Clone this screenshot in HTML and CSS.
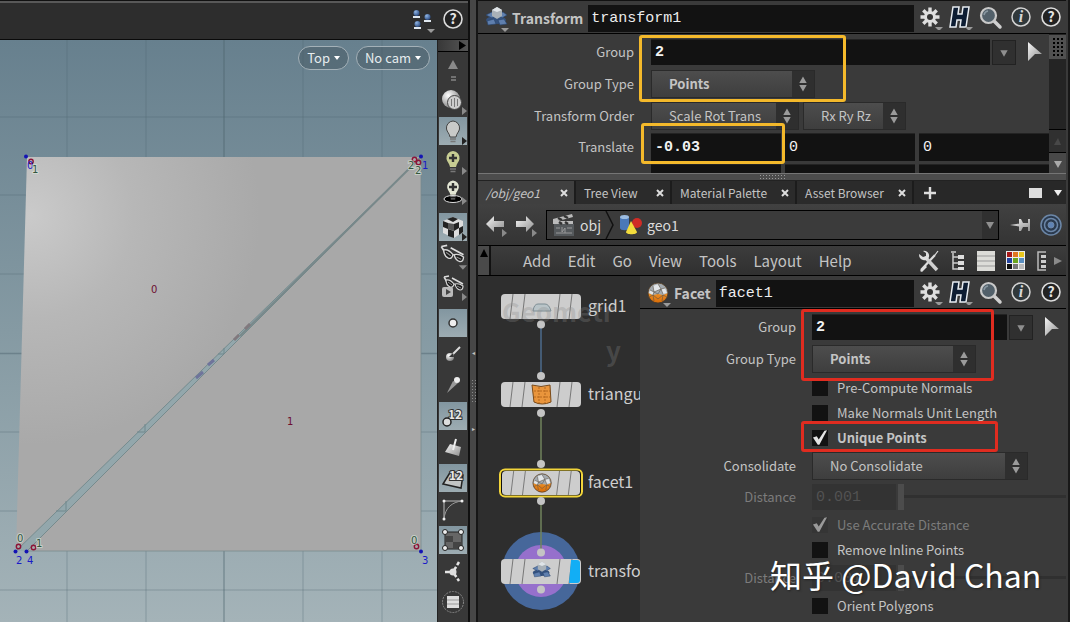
FILE: index.html
```
<!DOCTYPE html>
<html lang="en">

<head>
    <meta charset="UTF-8">
    <meta name="viewport" content="width=device-width, initial-scale=1.0">
    <link rel="stylesheet" href="styles.css">
    <title>geo1</title>
</head>

<body>
    <!-- shared icons -->
    <svg class="sprite" aria-hidden="true">
        <defs>
            <linearGradient id="metal" x1="0" y1="0" x2="1" y2="1">
                <stop offset="0" stop-color="#f6f6f6"/><stop offset="1" stop-color="#8e8e8e"/>
            </linearGradient>
            <radialGradient id="ball" cx=".35" cy=".3" r=".8">
                <stop offset="0" stop-color="#fff"/><stop offset="1" stop-color="#777"/>
            </radialGradient>
            <radialGradient id="blueball" cx=".35" cy=".3" r=".8">
                <stop offset="0" stop-color="#8fb4e2"/><stop offset="1" stop-color="#1f3f78"/>
            </radialGradient>
            <linearGradient id="orange" x1="0" y1="0" x2="0" y2="1">
                <stop offset="0" stop-color="#ffb347"/><stop offset="1" stop-color="#d96c06"/>
            </linearGradient>
        </defs>
        <symbol id="gear" viewBox="0 0 24 24">
            <g stroke="#dedede" stroke-width="3.4">
                <path d="M11 1.500V20.500M1.500 11H20.500M4.300 4.300L17.700 17.700M17.700 4.300L4.300 17.700"/>
            </g>
            <circle cx="11" cy="11" r="6" fill="#dedede"/>
            <circle cx="11" cy="11" r="3" fill="#333"/>
            <path d="M16 21h8l-4 4z" fill="#9a9a9a"/>
        </symbol>
        <symbol id="hlogo" viewBox="0 0 24 24">
            <path d="M4 1h6l-1 7h4l1-7h6l-3 20h-6l1-7H8l-1 7H1z" fill="#0d1d33" stroke="#e8edf2" stroke-width="1.500"/>
            <path d="M16 21h8l-4 4z" fill="#9a9a9a"/>
        </symbol>
        <symbol id="search" viewBox="0 0 24 24">
            <path d="M14 14l7 7" stroke="#d0d0d0" stroke-width="3.500" stroke-linecap="round"/>
            <circle cx="9.500" cy="9.500" r="7.500" fill="#52606a" stroke="#c9c9c9" stroke-width="2.200"/>
            <path d="M5 9a5 5 0 0 1 4-4" fill="none" stroke="#8a98a2" stroke-width="1.500"/>
        </symbol>
        <symbol id="info" viewBox="0 0 24 24">
            <circle cx="12" cy="11" r="9" fill="#30383b" stroke="#d2d2d2" stroke-width="1.500"/>
            <text x="12" y="16" text-anchor="middle" font-family="Liberation Serif, serif" font-style="italic" font-weight="bold" font-size="16" fill="#d8d8d8">i</text>
        </symbol>
        <symbol id="help" viewBox="0 0 24 24">
            <circle cx="12" cy="11" r="9" fill="#222" stroke="#dcdcdc" stroke-width="1.600"/>
            <text x="12" y="16" text-anchor="middle" font-family="Noto Sans CJK SC, sans-serif" font-weight="bold" font-size="14" fill="#e4e4e4">?</text>
        </symbol>
        <symbol id="updown" viewBox="0 0 22 28">
            <path d="M11 6l4 7H7zM11 22l4-7H7z" fill="#9b9b9b"/>
        </symbol>
        <symbol id="down" viewBox="0 0 24 24">
            <path d="M8 9h8l-4 7z" fill="#8f8f8f"/>
        </symbol>
        <symbol id="cursor" viewBox="0 0 16 20">
            <path d="M1 0l14 12H8l-7 7z" fill="url(#metal)"/>
        </symbol>
        <symbol id="facet" viewBox="0 0 24 24">
            <circle cx="11" cy="12" r="10" fill="url(#orange)"/>
            <path d="M1 12a10 10 0 0 1 20 0l-5 2-5-1-5 1z" fill="#a4abb0"/>
            <path d="M6 5l5-2 3 5-7 3zM14 8l4-1 2 5-4 1zM3 9l4 2-1 3-4-2z" fill="#e2e6e9"/>
            <path d="M11 3l3 5 2 5M7 11l7-3 4-1M6 5l1 6-1 3M3 9l4 2 4 2 3-5M2 16l4-2 5 4 5-4 4 2M6 14l1 6M16 14l-1 6" fill="none" stroke="#5b5247" stroke-width=".6"/>
            <circle cx="11" cy="12" r="10" fill="none" stroke="#4a3a2a" stroke-width=".8"/>
        </symbol>
        <symbol id="xform" viewBox="0 0 24 24">
            <ellipse cx="11" cy="14" rx="10" ry="4" fill="#35527e"/>
            <path d="M1 9l6-3 5 3-5 3zM13 8l5-2 4 3-5 3zM2 15l7-2 2 5-8 1zM13 14l6-1 3 5-7 1z" fill="#5f7fae" stroke="#27436c" stroke-width=".6"/>
            <path d="M7 4l5-3 5 3v6l-5 3-5-3z" fill="#a9b1b8"/>
            <path d="M7 4l5-3 5 3-5 2z" fill="#dfe4e8"/>
        </symbol>
        <symbol id="bulb" viewBox="0 0 24 28">
            <path d="M12 4a7 7 0 0 0-6.500 8c.5 3 3 4.500 3.500 8h6c.5-3.500 3-5 3.500-8A7 7 0 0 0 12 4z"/>
            <path d="M9 22h6M9.500 24.500h5" stroke="#777" stroke-width="1.500"/>
        </symbol>
        <symbol id="glasses" viewBox="0 0 24 24">
            <path d="M2 4l5-1M2 4l3 5M10 5l11 6" stroke="#ddd" stroke-width="1.500" fill="none"/>
            <path d="M4 7q4-1 8 4-1 4-4 3-4-2-4-7zM13 11q4-1 8 2 0 4-3 4-4-1-5-6z" fill="#1b1b1b" stroke="#d6d6d6" stroke-width="1.200"/>
            <path d="M6 9l4 3M15 13l4 2" stroke="#888"/>
        </symbol>
    </svg>

    <div class="app">
        <section class="scene-pane">
            <header class="scene-top">
                <button class="icon-btn" aria-label="Snapping">
                    <svg width="24" height="24" viewBox="0 0 24 24">
                        <g fill="#dfe7ef"><path d="M2 8h7v2H2zM13 12h7v2h-7zM3 19h7v2H3z"/></g>
                        <g fill="url(#blueball)"><circle cx="5.500" cy="5" r="3"/><circle cx="16.500" cy="9" r="3"/><circle cx="6.500" cy="16" r="3"/></g>
                        <path d="M16 21h8l-4 4z" fill="#9a9a9a"/>
                    </svg>
                </button>
                <button class="icon-btn" aria-label="Help"><svg width="24" height="24"><use href="#help"/></svg></button>
            </header>
            <div class="scene-body">
                <div class="viewport">
                    <svg class="scene" viewBox="0 40 437 582" preserveAspectRatio="xMidYMid slice">
                        <defs>
                            <linearGradient id="sky" x1="0" y1="0" x2="0" y2="1">
                                <stop offset="0" stop-color="#67808e"/><stop offset=".5" stop-color="#859aa3"/><stop offset="1" stop-color="#a4b3b8"/>
                            </linearGradient>
                            <radialGradient id="shade" gradientUnits="userSpaceOnUse" cx="30" cy="215" r="230">
                                <stop offset="0" stop-color="#cacaca"/><stop offset=".45" stop-color="#b7b7b7"/><stop offset="1" stop-color="#a9a9a9"/>
                            </radialGradient>
                        </defs>
                        <rect x="-500" y="40" width="1500" height="582" fill="url(#sky)"/>
                        <path d="M67 40v582M146 40v582M303 40v582M382 40v582M-500 117h1500M-500 195h1500M-500 274h1500M-500 432h1500M-500 511h1500M-500 590h1500" stroke="#4b616c" stroke-opacity=".35" fill="none"/>
                        <path d="M224 40v582M-500 353.500h1500" stroke="#4b616c" stroke-opacity=".45" stroke-width="1.500"/>
                        <path d="M421 157V551H27z" fill="#a8a8a8" stroke="#788b8d" stroke-width=".8"/>
                        <path d="M27 157H421L16 551z" fill="url(#shade)"/>
                        <path d="M421 157L224 354L27 551L16 551z" fill="#93a7ac"/>
                        <path d="M421 157L16 551M421 157L27 551" stroke="#74898b" stroke-width=".9"/>
                        <path d="M421 157L240 336" stroke="#78888a" stroke-width="2"/>
                        <path d="M66 501v10H56M145 424v8h-8M224 348v6h-6" fill="none" stroke="#71888d"/>
                        <path d="M196 378l7-6M208 365l6-5" stroke="#6f749b" stroke-width="3"/>
                        <path d="M234 340l5-5M245 329l5-5" stroke="#81797e" stroke-width="3"/>
                        <g fill="#1414b4">
                            <circle cx="26" cy="156.500" r="2"/><circle cx="421" cy="156.500" r="2"/>
                            <circle cx="15.500" cy="551.500" r="2"/><circle cx="26.500" cy="551.500" r="2"/><circle cx="421" cy="551.500" r="2"/>
                        </g>
                        <g fill="none" stroke="#8c1438" stroke-width="1.400">
                            <circle cx="31" cy="161.500" r="2.200"/><circle cx="414.500" cy="159.500" r="2.200"/><circle cx="418.500" cy="162.500" r="2.200"/>
                            <circle cx="18.500" cy="546.500" r="2.200"/><circle cx="33.500" cy="547.500" r="2.200"/><circle cx="416.500" cy="546.500" r="2.200"/>
                        </g>
                        <g class="num blue"><text x="27" y="169">0</text><text x="422" y="169">1</text><text x="16" y="564">2</text><text x="27" y="564">4</text><text x="422" y="564">3</text></g>
                        <g class="num vert"><text x="32" y="173">1</text><text x="408" y="169">2</text><text x="415" y="174">2</text><text x="17" y="542">0</text><text x="36" y="547">1</text><text x="411" y="544">0</text></g>
                        <g class="num prim"><text x="151" y="293">0</text><text x="287" y="425">1</text></g>
                    </svg>
                    <div class="cam-menus">
                        <button class="pill">Top<i></i></button>
                        <button class="pill">No cam<i></i></button>
                    </div>
                </div>
                <nav class="tools">
                    <button class="tools-collapse" aria-label="Collapse"><svg width="30" height="11" viewBox="0 0 30 11"><path d="M21 1l7 4.500-7 4.500z" fill="#000"/></svg></button>
                    <svg class="tools-scroll" width="20" height="24" viewBox="0 0 20 24"><path d="M10 2l5 9H5z" fill="#8a8a8a"/><path d="M8 19h5M8 22h5" stroke="#aaa" stroke-width="1.200"/></svg>
                    <div class="tool-group">
                        <button class="tool more" aria-label="Hide objects"><svg viewBox="0 0 28 28"><circle cx="12" cy="12" r="9" fill="url(#ball)"/><circle cx="15.500" cy="15.500" r="7" fill="#ccc" stroke="#444"/><path d="M12.500 12v7M15.500 11v9M18.500 12v7" stroke="#777"/></svg></button>
                        <button class="tool on more" aria-label="Headlight"><svg viewBox="0 0 24 28" fill="#c9cac8" stroke="#444"><use href="#bulb"/></svg></button>
                        <button class="tool more" aria-label="Normal lighting"><svg viewBox="0 0 24 28"><g fill="#c7cd93"><use href="#bulb"/></g><path d="M12 7v8M8 11h8" stroke="#333" stroke-width="2.400"/></svg></button>
                        <button class="tool more" aria-label="High quality lighting"><svg viewBox="0 0 24 28"><ellipse cx="12" cy="22" rx="9" ry="3.500" fill="#000" stroke="#ddd"/><g fill="#e3e6d4"><use href="#bulb" x="1" y="0" width="22" height="25"/></g><path d="M12 6v8M8 10h8" stroke="#333" stroke-width="2.400"/></svg></button>
                    </div>
                    <div class="tool-group">
                        <button class="tool on more" aria-label="Materials"><svg viewBox="0 0 28 28"><path d="M4 8l10-4 10 4v11l-9 6-11-5z" fill="#ddd"/><path d="M8 6l6-2 5 2-5 3zM4 8l5 2v6l-5-2zM9 16l6 2v7l-6-2zM15 11l5-2v6l-5 3zM20 15l4-2v6l-4 3z" fill="#222"/><path d="M9 10l6 1v7l-6-2z" fill="#555"/></svg></button>
                        <button class="tool" aria-label="Visibility"><svg viewBox="0 0 24 24"><use href="#glasses" y="-1"/><path d="M17 19h7l-3.500 4z" fill="#8a8a8a"/></svg></button>
                        <button class="tool more" aria-label="Flipbook"><svg viewBox="0 0 28 28"><use href="#glasses" x="3" y="0" width="24" height="24"/><rect x="3" y="14" width="11" height="10" rx="2" fill="#bbb"/><path d="M7 16l5 3-5 3z" fill="#444"/></svg></button>
                    </div>
                    <div class="tool-group wide">
                        <button class="tool on" aria-label="Points"><svg viewBox="0 0 28 28"><circle cx="14" cy="14" r="4" fill="#eee" stroke="#333" stroke-width="1.500"/></svg></button>
                        <button class="tool" aria-label="Point normals"><svg viewBox="0 0 28 28"><path d="M12 16L21 7" stroke="#ddd" stroke-width="2"/><circle cx="11" cy="17" r="4" fill="url(#ball)"/><path d="M10 17l4-4 1 4z" fill="#333"/></svg></button>
                        <button class="tool" aria-label="Point trails"><svg viewBox="0 0 28 28"><path d="M8 22l6-12 5 2z" fill="#999"/><circle cx="18" cy="9" r="3" fill="#eee"/></svg></button>
                        <button class="tool on" aria-label="Point numbers"><svg viewBox="0 0 28 28"><text x="9" y="17" class="badge">12</text><circle cx="8" cy="20" r="4" fill="#ddd" stroke="#222" stroke-width="1.500"/></svg></button>
                        <button class="tool" aria-label="Primitive normals"><svg viewBox="0 0 28 28"><path d="M6 19l5-8 11 3-2 9z" fill="url(#metal)"/><path d="M14 17l3-11" stroke="#eee" stroke-width="2"/></svg></button>
                        <button class="tool on" aria-label="Primitive numbers"><svg viewBox="0 0 28 28"><path d="M4 20l8-13 12 4-2 13z" fill="#c2c5c5" stroke="#222" stroke-width="1.500"/><text x="10" y="16" class="badge">12</text></svg></button>
                        <button class="tool" aria-label="Primitive hulls"><svg viewBox="0 0 28 28"><path d="M5 24V6h18" fill="none" stroke="#bbb"/><path d="M5 24C6 13 13 7 23 6" fill="none" stroke="#999"/><g fill="#eee"><circle cx="5" cy="6" r="1.500"/><circle cx="23" cy="6" r="1.500"/><circle cx="5" cy="24" r="1.500"/></g></svg></button>
                        <button class="tool on" aria-label="UV overlap"><svg viewBox="0 0 28 28"><path d="M6 6h17v17H6z" fill="#666" stroke="#222"/><path d="M6 10h8v6H6zM14 16h8v6h-8z" fill="#444"/><g fill="#eee" stroke="#222"><circle cx="6" cy="6" r="2.500"/><circle cx="22" cy="6" r="2.500"/><circle cx="6" cy="22" r="2.500"/><circle cx="22" cy="22" r="2.500"/></g></svg></button>
                        <button class="tool" aria-label="Handles"><svg viewBox="0 0 28 28"><path d="M14 15L20 5M14 15l6 9M12 15H4" stroke="#e4e4e4" stroke-width="2.500" stroke-dasharray="6 2"/><circle cx="14" cy="15" r="3.500" fill="#ddd"/></svg></button>
                        <button class="tool" aria-label="Display options"><svg viewBox="0 0 28 28"><circle cx="14" cy="14" r="10.500" fill="none" stroke="#888" stroke-dasharray="2 1"/><path d="M8 8h12v12H8z" fill="#ddd"/><path d="M8 12h12M8 16h12" stroke="#999"/></svg></button>
                    </div>
                </nav>
            </div>
        </section>

        <div class="divider"><span>◂</span><b></b><span>▸</span></div>

        <section class="side">
            <section class="params top">
                <header class="params-head">
                    <svg class="op-icon" width="24" height="24"><use href="#xform"/><path d="M16 22h8l-4 4z" fill="#9a9a9a"/></svg>
                    <label class="op-type" for="xformName">Transform</label>
                    <input class="op-name" id="xformName" type="text" value="transform1">
                    <div class="head-icons">
                        <button class="icon-btn" aria-label="Settings"><svg width="24" height="24"><use href="#gear"/></svg></button>
                        <button class="icon-btn" aria-label="Houdini"><svg width="24" height="24"><use href="#hlogo"/></svg></button>
                        <button class="icon-btn" aria-label="Search"><svg width="24" height="24"><use href="#search"/></svg></button>
                        <button class="icon-btn" aria-label="Info"><svg width="24" height="24"><use href="#info"/></svg></button>
                        <button class="icon-btn" aria-label="Help"><svg width="24" height="24"><use href="#help"/></svg></button>
                    </div>
                </header>
                <div class="params-scroll">
                    <div class="rows">
                        <div class="row">
                            <label class="name" for="xGroup">Group</label>
                            <div class="group-field">
                                <input class="field bold" id="xGroup" type="text" value="2">
                                <button class="drop" aria-label="Choose group"><svg width="24" height="24"><use href="#down"/></svg></button>
                                <button class="pick" aria-label="Pick"><svg width="16" height="20"><use href="#cursor"/></svg></button>
                            </div>
                        </div>
                        <div class="row">
                            <label class="name" for="xType">Group Type</label>
                            <span class="select w-type"><select class="bold" id="xType"><option>Points</option></select><svg><use href="#updown"/></svg></span>
                        </div>
                        <div class="row short">
                            <label class="name" for="xOrder">Transform Order</label>
                            <span class="select w-order"><select id="xOrder"><option>Scale Rot Trans</option></select><svg><use href="#updown"/></svg></span>
                            <span class="select w-rot"><select aria-label="Rotate order"><option>Rx Ry Rz</option></select><svg><use href="#updown"/></svg></span>
                        </div>
                        <div class="row short">
                            <label class="name" for="tx">Translate</label>
                            <div class="vec">
                                <input class="field bold" id="tx" type="text" value="-0.03">
                                <input class="field" aria-label="Translate y" type="text" value="0">
                                <input class="field" aria-label="Translate z" type="text" value="0">
                            </div>
                        </div>
                        <div class="row">
                            <span class="name"></span>
                            <div class="vec">
                                <input class="field" aria-label="Rotate x" type="text">
                                <input class="field" aria-label="Rotate y" type="text">
                                <input class="field" aria-label="Rotate z" type="text">
                            </div>
                        </div>
                    </div>
                    <div class="scrollbar">
                        <div class="thumb"></div>
                        <svg width="17" height="23"><path d="M5 15h7l-3-7z" fill="#484848"/></svg>
                        <svg class="lit" width="17" height="21"><path d="M5 8h8l-4 7z" fill="#aaa"/></svg>
                    </div>
                </div>
                <div class="mark yellow mark-group"></div>
                <div class="mark yellow mark-translate"></div>
            </section>

            <div class="splitter"><b></b></div>

            <div class="tabs">
                <a class="tab active" href="#">/obj/geo1<svg width="8" height="8"><path d="M1 1l6 6M7 1L1 7"/></svg></a>
                <a class="tab" href="#">Tree View<svg width="8" height="8"><path d="M1 1l6 6M7 1L1 7"/></svg></a>
                <a class="tab" href="#">Material Palette<svg width="8" height="8"><path d="M1 1l6 6M7 1L1 7"/></svg></a>
                <a class="tab" href="#">Asset Browser<svg width="8" height="8"><path d="M1 1l6 6M7 1L1 7"/></svg></a>
                <button class="add-tab" aria-label="New tab"><svg width="12" height="12"><path d="M6 0v12M0 6h12" stroke="#ddd" stroke-width="2.400"/></svg></button>
                <svg class="tab-end" width="36" height="12"><path d="M1 1h13v10H1z" fill="#ddd"/><path d="M26 3h8l-4 6z" fill="#eee"/></svg>
            </div>

            <div class="path">
                <button class="icon-btn" aria-label="Back"><svg width="24" height="24" viewBox="0 0 24 24"><path d="M1 11l8-8v5h10v6H9v5z" fill="url(#metal)"/><path d="M17 16l5 4-5 4z" fill="#8a8a8a"/></svg></button>
                <button class="icon-btn" aria-label="Forward"><svg width="24" height="24" viewBox="0 0 24 24"><path d="M19 11l-8-8v5H1v6h10v5z" fill="url(#metal)"/><path d="M17 16l5 4-5 4z" fill="#8a8a8a"/></svg></button>
                <div class="crumbs">
                    <svg width="24" height="24" viewBox="0 0 24 24"><path d="M2 11h20v12H2z" fill="#55595c"/><path d="M4 15h4M10 14v5l3-4v5M15 15h5M4 20h16" stroke="#999" fill="none"/><path d="M1 6l19-5 1 3-15 4h15v3H1z" fill="#bbb"/><path d="M6 5l4 2M12 3l4 2M7 9l3 2M13 9l3 2" stroke="#333" stroke-width="2.500"/></svg>
                    <a href="#">obj</a>
                    <svg width="10" height="28"><path d="M1 0l7 14-7 14" fill="none" stroke="#111" stroke-width="1.500"/></svg>
                    <svg class="geo" width="24" height="22" viewBox="0 0 24 22"><path d="M1 3v11c0 3 9 3 9 0V3z" fill="#4a78b8"/><ellipse cx="5.500" cy="3" rx="4.500" ry="2" fill="#9dbde2"/><circle cx="18" cy="9" r="5" fill="#cf2c26"/><path d="M12 7l6 11c0 3-11 3-11 0z" fill="#f3dc3c"/></svg>
                    <a href="#">geo1</a>
                    <button class="crumb-drop" aria-label="Recent paths"><svg width="16" height="24" viewBox="4 0 16 24"><use href="#down" width="24" height="24"/></svg></button>
                </div>
                <button class="icon-btn" aria-label="Pin"><svg width="24" height="24" viewBox="0 0 24 24"><path d="M1 12l9-1.500v3zM10 6l2 0 2 4h5V6h2v12h-2v-4h-5l-2 4h-2z" fill="url(#metal)"/></svg></button>
                <button class="icon-btn" aria-label="Link"><svg width="24" height="24" viewBox="0 0 24 24" fill="none" stroke="#6c87a8"><circle cx="12" cy="12" r="10" fill="#2b3a4e" stroke-width="1.500"/><circle cx="12" cy="12" r="6.500" stroke-width="1.500"/><circle cx="12" cy="12" r="3" fill="#5f83b5"/></svg></button>
            </div>

            <div class="menubar">
                <button class="menu-scroll" aria-label="Scroll"><svg width="10" height="10"><path d="M5 1l4 8H1z" fill="#000"/></svg></button>
                <a href="#">Add</a><a href="#">Edit</a><a href="#">Go</a><a href="#">View</a><a href="#">Tools</a><a href="#">Layout</a><a href="#">Help</a>
                <div class="menu-icons">
                    <svg width="22" height="22" viewBox="0 0 22 22"><path d="M3 20L17 5" stroke="#ddd" stroke-width="2.200"/><path d="M17 5l3-4" stroke="#ddd" stroke-width="1.200"/><path d="M2 21l5-6 2 2-5 5z" fill="#ddd"/><path d="M7 7l12 13" stroke="#d0d0d0" stroke-width="3.500"/><path d="M1 4l4 3 3-1V3L5 1a5 5 0 0 1 6 6 5 5 0 0 1-6 3 6 6 0 0 1-4-6z" fill="#ddd"/></svg>
                    <svg width="16" height="22" viewBox="0 0 16 22"><path d="M1 2h5M3 3v16h5M3 7h5M3 13h5" fill="none" stroke="#ccc" stroke-width="1.500"/><path d="M8 5h6v4H8zM8 11h6v4H8zM8 17h6v3H8z" fill="#ddd"/></svg>
                    <svg width="20" height="22" viewBox="0 0 20 22"><path d="M1 1h18v20H1z" fill="#dcdcd8"/><path d="M1 6h18M1 11h18M1 16h18" stroke="#999"/></svg>
                    <svg width="20" height="22" viewBox="0 0 20 22"><path d="M0 1h19v19H0z" fill="#eee"/><g><path fill="#a81a1a" d="M1 2h5v5H1z"/><path fill="#e07820" d="M7 2h5v5H7z"/><path fill="#e9c71e" d="M13 2h5v5h-5z"/><path fill="#2443a0" d="M1 8h5v5H1z"/><path fill="#6aa51e" d="M7 8h5v5H7z"/><path fill="#5a8ec0" d="M13 8h5v5h-5z"/><path fill="#111" d="M1 14h5v5H1z"/><path fill="#777" d="M7 14h5v5H7z"/><path fill="#bbb" d="M13 14h5v5h-5z"/></g></svg>
                    <svg width="30" height="22" viewBox="0 0 30 22"><path d="M10 2H2v18h8" fill="none" stroke="#bbb" stroke-width="1.500"/><path d="M5 5h5v3H5zM5 10h5v3H5zM5 15h5v3H5z" fill="#ccc"/><path d="M18 7l8 4-8 4z" fill="#8a8a8a"/></svg>
                </div>
            </div>

            <div class="work">
                <div class="network">
                    <svg width="162" height="346" viewBox="478 276 162 346">
                        <defs>
                            <g id="node">
                                <rect x="0" y="0" width="80" height="25" rx="4" fill="#cdcdcd"/>
                                <path d="M12 0L9 25M24 0l-3 25M59 0l-3 25M71 0l-3 25" stroke="#777"/>
                            </g>
                        </defs>
                        <path d="M541 324v51" stroke="#4d6b8c" stroke-width="1.500"/>
                        <path d="M541 413v51" stroke="#71835c" stroke-width="1.500"/>
                        <circle cx="541" cy="571" r="39" fill="#46679a"/>
                        <circle cx="541" cy="571" r="26" fill="#9670cc"/>
                        <path d="M541 502v50" stroke="#71835c" stroke-width="1.500"/>
                        <use href="#node" x="501" y="294"/>
                        <use href="#node" x="501" y="382"/>
                        <rect x="500" y="469.500" width="82" height="27" rx="5" fill="#111" stroke="#f2d53a" stroke-width="2"/>
                        <svg x="502" y="471" width="78" height="24" viewBox="0 0 80 25" preserveAspectRatio="none"><use href="#node"/></svg>
                        <use href="#node" x="501" y="559"/>
                        <path d="M571 560h6q3 0 3 3v17q0 3-3 3h-8z" fill="#12aef5"/>
                        <path d="M533 311q1-7 5-7h7q4 0 6 7z" fill="#b9c4c8" stroke="#7d8d94"/>
                        <path d="M532 385q9 3 18 0l1 17q-9 4-17 0z" fill="#e9953c" stroke="#7a4a18"/>
                        <path d="M534 391h16M534 397h16M539 387v16M545 387v16" stroke="#b5691f" stroke-dasharray="2 1"/>
                        <use href="#facet" x="532" y="472" width="22" height="22"/>
                        <use href="#xform" x="532" y="561" width="20" height="20"/>
                        <g fill="#c4c4c4"><circle cx="541" cy="324.500" r="4"/><circle cx="541" cy="376" r="4"/><circle cx="541" cy="413" r="4"/><circle cx="541" cy="464" r="4"/><circle cx="541" cy="501" r="4"/><circle cx="541" cy="552.500" r="4"/><circle cx="541" cy="589.500" r="4"/></g>
                        <text x="502" y="322" class="ghost">Geometr</text>
                        <text x="606" y="361" class="ghost">y</text>
                        <g class="node-name"><text x="588" y="312">grid1</text><text x="588" y="400">triangu</text><text x="588" y="488">facet1</text><text x="588" y="577">transfo</text></g>
                    </svg>
                </div>

                <section class="params facet">
                    <header class="params-head">
                        <svg class="op-icon" width="24" height="24"><use href="#facet"/><path d="M16 22h8l-4 4z" fill="#9a9a9a"/></svg>
                        <label class="op-type" for="facetName">Facet</label>
                        <input class="op-name" id="facetName" type="text" value="facet1">
                        <div class="head-icons">
                            <button class="icon-btn" aria-label="Settings"><svg width="24" height="24"><use href="#gear"/></svg></button>
                            <button class="icon-btn" aria-label="Houdini"><svg width="24" height="24"><use href="#hlogo"/></svg></button>
                            <button class="icon-btn" aria-label="Search"><svg width="24" height="24"><use href="#search"/></svg></button>
                            <button class="icon-btn" aria-label="Info"><svg width="24" height="24"><use href="#info"/></svg></button>
                            <button class="icon-btn" aria-label="Help"><svg width="24" height="24"><use href="#help"/></svg></button>
                        </div>
                    </header>
                    <div class="rows">
                        <div class="row">
                            <label class="name" for="fGroup">Group</label>
                            <div class="group-field">
                                <input class="field bold" id="fGroup" type="text" value="2">
                                <button class="drop" aria-label="Choose group"><svg width="24" height="24"><use href="#down"/></svg></button>
                                <button class="pick" aria-label="Pick"><svg width="16" height="20"><use href="#cursor"/></svg></button>
                            </div>
                        </div>
                        <div class="row">
                            <label class="name" for="fType">Group Type</label>
                            <span class="select w-type"><select class="bold" id="fType"><option>Points</option></select><svg><use href="#updown"/></svg></span>
                        </div>
                        <label class="check"><input type="checkbox">Pre-Compute Normals</label>
                        <label class="check"><input type="checkbox">Make Normals Unit Length</label>
                        <label class="check bold"><input type="checkbox" checked>Unique Points</label>
                        <div class="row short">
                            <label class="name" for="cons">Consolidate</label>
                            <span class="select w-cons"><select id="cons"><option>No Consolidate</option></select><svg><use href="#updown"/></svg></span>
                        </div>
                        <div class="row short off">
                            <label class="name" for="dist1">Distance</label>
                            <input class="field w-num" id="dist1" type="text" value="0.001" disabled>
                            <input class="slider" type="range" value="0" aria-label="Distance" disabled>
                        </div>
                        <label class="check off"><input type="checkbox" checked disabled>Use Accurate Distance</label>
                        <label class="check"><input type="checkbox">Remove Inline Points</label>
                        <div class="row short off">
                            <label class="name" for="dist2">Distance</label>
                            <input class="field w-num" id="dist2" type="text" value="0.001" disabled>
                            <input class="slider" type="range" value="0" aria-label="Inline distance" disabled>
                        </div>
                        <label class="check"><input type="checkbox">Orient Polygons</label>
                    </div>
                    <div class="mark red mark-group"></div>
                    <div class="mark red mark-unique"></div>
                    <div class="watermark">知乎 @David Chan</div>
                </section>
            </div>
        </section>
    </div>
</body>
</html>
```

FILE: styles.css
```
* {
    box-sizing: border-box;
    margin: 0;
    padding: 0;
}

body {
    background-color: #3a3a3a;
    color: #c4c4c4;
    font-family: "Noto Sans CJK SC", "Noto Sans", sans-serif;
    font-size: 13px;
    line-height: 20px;
    height: 100vh;
    overflow: hidden;
}

svg {
    display: block;
    overflow: visible;
}

.sprite {
    position: absolute;
    width: 0;
    height: 0;
    overflow: hidden;
}

button, input, select {
    font: inherit;
    color: inherit;
    border: none;
    background: none;
    border-radius: 0;
    min-width: 0;
}

a {
    color: inherit;
    text-decoration: none;
}

.bold {
    font-weight: bold;
}

.app {
    display: grid;
    grid-template-columns: 470fr 8px 592fr;
    height: 100vh;
}

/* left: 3d view */

.scene-pane {
    display: flex;
    flex-direction: column;
    min-width: 0;
    min-height: 0;
    border-right: 2px solid #101010;
}

.scene-top {
    display: flex;
    flex: none;
    align-items: center;
    justify-content: flex-end;
    gap: 6px;
    height: 40px;
    padding-right: 3px;
    background: #2d2d2d;
    border-top: 1px solid #111;
    border-bottom: 1px solid #0a0a0a;
    box-shadow: inset 0 2px #585858;
}

.icon-btn {
    width: 24px;
    height: 24px;
    flex: none;
}

.scene-body {
    display: flex;
    flex: 1;
    min-height: 0;
}

.viewport {
    position: relative;
    flex: 1;
    min-width: 0;
    overflow: hidden;
}

.scene {
    width: 100%;
    height: 100%;
}

.num {
    font-family: "DejaVu Sans", sans-serif;
    font-size: 10px;
}

.blue { fill: #1a1ac8; }
.vert { fill: #33553f; stroke: #dce8dc; stroke-width: 2px; stroke-opacity: .6; paint-order: stroke; }
.prim { fill: #6d0f30; }

.cam-menus {
    position: absolute;
    top: 6px;
    right: 7px;
    display: flex;
    gap: 7px;
}

.pill {
    display: flex;
    align-items: center;
    gap: 4px;
    height: 24px;
    padding: 0 8px;
    border: 1px solid #a4b1b8;
    border-radius: 12px;
    background: rgba(70, 88, 98, .5);
    color: #e6ecef;
}

.pill i {
    border: 3px solid transparent;
    border-top: 4px solid #fff;
    border-bottom: none;
}

.tools {
    width: 31px;
    flex: none;
    display: flex;
    flex-direction: column;
    align-items: center;
    background: #383838;
    border-left: 1px solid #222;
}

.tools-collapse {
    width: 100%;
    height: 12px;
    background: linear-gradient(90deg, #383838, #555);
    border-bottom: 1px solid #000;
}

.tools-scroll {
    margin: 6px 0 5px;
}

.tool-group {
    display: flex;
    flex-direction: column;
    gap: 2px;
    margin-bottom: 8px;
}

.tool-group.wide {
    gap: 3px;
}

.tool {
    position: relative;
    width: 28px;
    height: 28px;
    flex: none;
}

.tool svg {
    width: 28px;
    height: 28px;
}

.tool.on {
    background: linear-gradient(#8296a0, #9dacb2);
}

.tool.more::after {
    content: "";
    position: absolute;
    right: 0;
    bottom: 0;
    border: 4px solid transparent;
    border-left: 5px solid #8a8a8a;
    border-right: none;
}

.tool.on.more::after {
    border-left-color: #222;
}

.badge {
    font-size: 12px;
    font-weight: bold;
    fill: #e8e8e8;
    stroke: #333;
    stroke-width: 2px;
    paint-order: stroke;
}

.divider {
    display: flex;
    flex-direction: column;
    align-items: center;
    justify-content: center;
    gap: 16px;
    padding-top: 160px;
    background: #474747;
    border-right: 2px solid #161616;
    font-size: 6px;
}

.divider b {
    width: 5px;
    height: 24px;
    background: radial-gradient(#888 1px, transparent 1px) 0 0 / 3px 3px;
}

/* right: panes */

.side {
    display: flex;
    flex-direction: column;
    min-width: 0;
    min-height: 0;
    padding-right: 2px;
    border-right: 2px solid #181818;
    overflow: hidden;
}

.params {
    position: relative;
    background: #3a3a3a;
}

.params.top {
    flex: none;
    height: 173px;
    padding-top: 2px;
    overflow: hidden;
    border-top: 1px solid #111;
    display: flex;
    flex-direction: column;
}

.params-head {
    display: flex;
    flex: none;
    align-items: center;
    height: 31px;
    padding-left: 7px;
    padding-right: 3px;
    border-bottom: 1px solid #000;
}

.op-icon {
    flex: none;
    margin-right: 3px;
}

.op-type {
    font-size: 14px;
    font-weight: bold;
    margin-right: 5px;
}

.op-name {
    flex: 1;
    height: 27px;
    padding: 0 3px;
    background: #121212;
    color: #ededed;
    font-family: "Liberation Mono", monospace;
    font-size: 15px;
}

.head-icons {
    display: flex;
    gap: 6px;
    margin-left: 5px;
}

.params-scroll {
    display: flex;
    flex: 1;
    min-height: 0;
}

.rows {
    flex: 1;
    min-width: 0;
    padding-top: 2px;
}

.row {
    display: flex;
    align-items: center;
    height: 32px;
}

.row.short {
    height: 31px;
}

.name {
    width: 156px;
    margin-right: 17px;
    flex: none;
    text-align: right;
}

.facet .name {
    margin-right: 16px;
}

.field {
    height: 26px;
    padding: 0 4px;
    background: #121212;
    border-top: 1px solid #232323;
    color: #f2f2f2;
    font-family: "Liberation Mono", monospace;
    font-size: 15px;
}

.group-field {
    display: flex;
    flex: 1;
    align-items: center;
    min-width: 0;
    padding-right: 6px;
}

.group-field .field {
    flex: 1;
}

.drop {
    width: 24px;
    height: 25px;
    margin: 0 11px 0 2px;
    background: #303030;
    border: 1px solid #222;
}

.drop svg {
    width: 22px;
}

.pick {
    width: 16px;
    height: 20px;
}

.vec {
    display: grid;
    grid-template-columns: repeat(3, 1fr);
    gap: 4px;
    flex: 1;
    min-width: 0;
}

.vec .field {
    width: 100%;
    height: 28px;
}

.select {
    position: relative;
    flex: none;
    height: 28px;
    margin-right: 4px;
    background: linear-gradient(#4d4d4d, #3e3e3e);
    border: 1px solid #2a2a2a;
}

.select select {
    appearance: none;
    width: 100%;
    height: 100%;
    padding-left: 17px;
}

.select svg {
    position: absolute;
    top: 0;
    right: 0;
    width: 22px;
    height: 26px;
    background: #2f2f2f;
    pointer-events: none;
}

.w-type { width: 164px; }
.w-order { width: 148px; }
.w-rot { width: 103px; }
.w-cons { width: 216px; }
.w-num { width: 84px; }

.scrollbar {
    display: flex;
    flex-direction: column;
    width: 17px;
    background: #242424;
}

.thumb {
    height: 24px;
    margin: 1px 0 auto;
    background: radial-gradient(#000 1px, transparent 1px) 4px 3px / 4px 4px, #505050;
    border: 3px solid #505050;
}

.scrollbar svg {
    flex: none;
    background: #303030;
    border-top: 1px solid #000;
}

.scrollbar svg.lit {
    background: #484848;
}

/* annotation frames drawn over the fields */

.mark {
    position: absolute;
    border: 3px solid;
    border-radius: 3px;
    pointer-events: none;
}

.yellow { border-color: #f4b92b; }
.red { border-color: #e02c20; }

.top .mark-group {
    left: 161px;
    top: 34px;
    width: 207px;
    height: 67px;
}

.mark-translate {
    left: 163px;
    top: 122px;
    width: 144px;
    height: 41px;
}

.splitter {
    flex: none;
    height: 8px;
    background: #4c4c4c;
    border-top: 1px solid #757575;
    border-bottom: 1px solid #222;
}

.splitter b {
    display: block;
    width: 26px;
    height: 6px;
    margin: 0 auto;
    background: radial-gradient(#999 1px, transparent 1px) 0 0 / 3px 3px;
}

.tabs {
    display: flex;
    flex: none;
    align-items: center;
    height: 23px;
    background: #282828;
}

.tab {
    display: flex;
    align-items: center;
    min-width: 96px;
    height: 23px;
    padding: 0 6px 0 8px;
    border-right: 2px solid #1c1c1c;
    background: #2b2b2b;
    font-size: 12px;
}

.tab svg {
    margin-left: auto;
    stroke: #ddd;
    stroke-width: 2px;
}

.tab:not(.active) svg {
    padding-left: 14px;
    box-sizing: content-box;
}

.tab.active {
    min-width: 98px;
    background: #404040;
    font-style: italic;
}

.add-tab {
    margin-left: 10px;
}

.tab-end {
    margin: 0 2px 0 auto;
}

.path {
    display: flex;
    flex: none;
    align-items: center;
    gap: 6px;
    height: 42px;
    padding: 0 3px 0 7px;
    background: linear-gradient(#414141, #343434);
    border-bottom: 1px solid #000;
}

.crumbs {
    display: flex;
    flex: 1;
    align-items: center;
    gap: 4px;
    height: 30px;
    margin: 0 4px 0 1px;
    padding-left: 5px;
    border: 1px solid #000;
    background: #3b3b3b;
    color: #dcdcdc;
    font-size: 14px;
}

.crumb-drop {
    margin-left: auto;
    height: 28px;
    background: #303030;
}

.menubar {
    display: flex;
    flex: none;
    align-items: center;
    gap: 17px;
    height: 30px;
    background: linear-gradient(#3c3c3c, #303030);
    border-bottom: 1px solid #000;
    font-size: 15px;
}

.menu-scroll {
    width: 13px;
    height: 29px;
    padding: 2px 1px;
    margin-right: 15px;
    background: #4a4a4a;
    border-right: 2px solid #111;
    align-self: flex-start;
}

.menu-scroll svg {
    margin-bottom: 15px;
}

.menu-icons {
    display: flex;
    gap: 10px;
    margin-left: auto;
}

.work {
    display: flex;
    flex: 1;
    min-height: 0;
}

.network {
    flex: none;
    width: 162px;
    background: #2e2e2e;
    overflow: hidden;
}

.ghost {
    font-size: 26px;
    font-weight: bold;
    fill: #888;
    fill-opacity: .3;
}

.node-name {
    font-size: 16px;
    fill: #cfcfcf;
}

.facet {
    flex: 1;
    min-width: 0;
    padding-top: 2px;
    overflow: hidden;
}

.check {
    display: flex;
    align-items: center;
    height: 25px;
    padding-left: 172px;
}

.check input {
    appearance: none;
    width: 16px;
    height: 16px;
    margin-right: 9px;
    background: #121212;
}

.check input:checked::before {
    content: "";
    display: block;
    width: 16px;
    height: 16px;
    background: #e4e4e4;
    clip-path: polygon(6% 50%, 30% 42%, 42% 62%, 78% 8%, 94% 4%, 46% 96%, 36% 96%);
}

.off {
    color: #7c7c7c;
}

.off .field {
    background: #333;
    border-color: #333;
    color: #525252;
}

.check.off input {
    background: #353535;
}

.check.off input:checked::before {
    background: #999;
}

.slider {
    appearance: none;
    flex: 1;
    height: 26px;
    background: linear-gradient(#303030, #303030) 0 50% / 100% 3px no-repeat;
    margin-left: 2px;
}

.slider::-webkit-slider-thumb {
    appearance: none;
    width: 6px;
    height: 26px;
    background: #4c4c4c;
}

.facet .mark-group {
    left: 161px;
    top: 33px;
    width: 193px;
    height: 72px;
}

.mark-unique {
    left: 161px;
    top: 145px;
    width: 197px;
    height: 31px;
}

.watermark {
    position: absolute;
    left: 130px;
    top: 276px;
    color: #fff;
    font-size: 32px;
    line-height: 44px;
    text-shadow: 1px 1px 2px #222;
    white-space: nowrap;
}
```
